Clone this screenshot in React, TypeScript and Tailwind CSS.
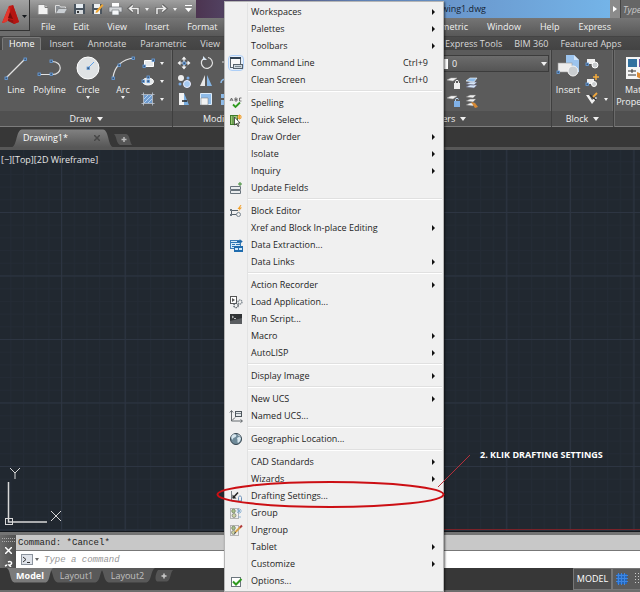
import React from "react";

type SvgProps = { w?: number; h?: number; children: React.ReactNode; className?: string };

function Art({ w = 16, h = 16, children, className = "" }: SvgProps) {
  return (
    <svg width={w} height={h} viewBox={`0 0 ${w} ${h}`} fill="none" aria-hidden="true" className={`shrink-0 ${className}`}>
      {children}
    </svg>
  );
}

function Caret({ big = false }: { big?: boolean }) {
  return big ? (
    <Art w={6} h={4}><path d="M0 0h6L3 4z" fill="#f0f0f0" /></Art>
  ) : (
    <Art w={4} h={3}><path d="M0 0h4L2 3z" fill="#f0f0f0" /></Art>
  );
}

/* ---------- menu icons ---------- */

const menuIcons: Record<string, React.ReactNode> = {
  command: (
    <>
      <rect x="1.500" y="1.500" width="10" height="10" fill="#f8f8f8" stroke="#5a656f" />
      <path d="M1 2h11" stroke="#2f4050" strokeWidth="2" />
      <rect x="4.500" y="8.500" width="9" height="4" fill="#cfd8de" stroke="#55616b" />
      <path d="M6 10.500h6" stroke="#7d8a94" />
    </>
  ),
  spelling: (
    <>
      <path d="M1 5l1.500-3L4 5M1.600 4h2M6 5V2h1.600M6 3.500h2M6 5h2V2M12.500 2H10.500v3h2" stroke="#555" strokeWidth=".8" />
      <path d="M4 8.500l2.500 2.500L11 6.500" stroke="#2f9a1f" strokeWidth="1.800" />
    </>
  ),
  quick: (
    <>
      <rect x="1.500" y="2.500" width="7" height="9" fill="#9cc77a" stroke="#3f7a2a" />
      <path d="M4 2v10" stroke="#3f7a2a" />
      <path d="M5.500 4v8l2-1.500 1.500 3 1-.5-1.300-3H11z" fill="#fff" stroke="#333" strokeWidth=".8" />
      <path d="M10.500 1.500v5M8 4h5M9 2l3 4M12 2L9 6" stroke="#f0a030" />
    </>
  ),
  fields: (
    <>
      <path d="M1.500 5.500h10v3h-10zM1.500 9.500h10v3h-10z" fill="#e9ecee" stroke="#68737c" />
      <path d="M11 1v4M9 3h4" stroke="#3f8a34" />
    </>
  ),
  block: (
    <>
      <path d="M2 6.500h7M2.500 6v5M2 10.500h7" stroke="#56606a" />
      <circle cx="9.500" cy="10.500" r="2" fill="#eee" stroke="#7b8791" />
      <path d="M1 5h2v2H1zM1 10h2v2H1z" fill="#6b7781" />
      <path d="M11.500 1L8.500 5h2l-1.500 3 4-4.500h-2L12.500 1z" fill="#f2a12c" />
    </>
  ),
  extract: (
    <>
      <rect x="1.500" y="2.500" width="10" height="8" fill="#d6ebf8" stroke="#3a7db5" />
      <path d="M2 4.500h9M3 6.500h3M3 8.500h2M7 6.500h4" stroke="#2c77b5" />
      <path d="M5 8h9v6H5z" fill="#1f6cae" />
      <path d="M6 10h3v2H6zM10 10h3v2h-3z" fill="#cfe8f9" />
      <path d="M8 3.500h5M11 1.500l2 2-2 2" stroke="#1b66a8" />
    </>
  ),
  load: (
    <>
      <rect x="1.500" y="1.500" width="6" height="7" fill="#fff" stroke="#555" />
      <path d="M3 3l3 2-3 2z" fill="#555" />
      <circle cx="7" cy="10.500" r="2.200" stroke="#5b646b" strokeDasharray="1.500 .7" strokeWidth="1.300" />
      <circle cx="11" cy="7" r="2" stroke="#7b858c" strokeDasharray="1.300 .6" strokeWidth="1.300" />
    </>
  ),
  script: (
    <>
      <rect x="1" y="2" width="12" height="10" fill="#5a5d60" />
      <path d="M1 2h12v4l-12 3z" fill="#303335" />
      <path d="M3 4l1.500 1L3 6M5 6.500h2" stroke="#fff" strokeWidth=".7" />
    </>
  ),
  ucs: (
    <>
      <path d="M2.500 2v10H13M0.800 3.500L2.500 1.500l1.700 2M11.500 10.500l2 1.500-2 1.500M3 11.500L6 8.500" stroke="#555b60" strokeWidth=".9" />
      <rect x="6.500" y="2.500" width="6" height="5" fill="#e4e8ea" stroke="#4e565c" />
      <path d="M7 4.500h5" stroke="#7b858c" />
    </>
  ),
  geo: (
    <>
      <circle cx="7" cy="7" r="5.500" fill="#6e8a99" stroke="#34444e" />
      <path d="M4 2.500c3-1 4 .5 3 2S4 5 3.500 8C1.500 6 2 4 4 2.500zM8 6c2-1.500 3-1 4 0-.5 3-1.500 4-3 5-1-1.500 0-2-1-5z" fill="#d6e6ee" />
      <path d="M9 2.500l2 2" stroke="#fff" />
    </>
  ),
  drafting: (
    <>
      <path d="M2.500 2v10H13" stroke="#7b8288" />
      <path d="M4 9l5-5.500" stroke="#222" strokeWidth="1.500" />
      <path d="M3.500 5.500v4h4z" fill="#222" />
      <path d="M9.500 12V8.500c0-2 3-2 3 0V12" stroke="#6d93bb" />
    </>
  ),
  group: (
    <>
      <rect x="1.500" y="2.500" width="8" height="10" stroke="#777" strokeDasharray="1 1" />
      <circle cx="4.500" cy="5" r="1.800" fill="#a9bf8d" stroke="#66784f" strokeWidth=".7" />
      <circle cx="5" cy="9.500" r="2" fill="#cbd3a1" stroke="#777" strokeWidth=".7" />
      <path d="M10 2v6M7.500 5H13M8 3l4 4M12 3L8 7M9 11h3" stroke="#7fa9cf" strokeWidth=".8" />
    </>
  ),
  ungroup: (
    <>
      <rect x="1.500" y="2.500" width="8" height="10" stroke="#777" strokeDasharray="1 1" />
      <circle cx="4.500" cy="5" r="1.800" fill="#a9bf8d" stroke="#66784f" strokeWidth=".7" />
      <circle cx="4.500" cy="9.500" r="2" fill="#cbd3a1" stroke="#777" strokeWidth=".7" />
      <path d="M6.500 9L11.500 4" stroke="#d9a448" strokeWidth="2" />
      <path d="M11 4.500L13 2.500" stroke="#b23a3a" strokeWidth="2" />
      <path d="M5.500 10.500l1-1.500" stroke="#333" />
    </>
  ),
  options: (
    <>
      <rect x="2.500" y="3.500" width="9" height="9" fill="#fff" stroke="#6c767d" />
      <path d="M4 7.500l3 3L12.500 5" stroke="#2f9a1f" strokeWidth="2" />
    </>
  ),
};

type Item = { label: string; icon?: string; sub?: boolean; key?: string; on?: boolean };

const menuGroups: Item[][] = [
  [
    { label: "Workspaces", sub: true },
    { label: "Palettes", sub: true },
    { label: "Toolbars", sub: true },
    { label: "Command Line", icon: "command", key: "Ctrl+9", on: true },
    { label: "Clean Screen", key: "Ctrl+0" },
  ],
  [
    { label: "Spelling", icon: "spelling" },
    { label: "Quick Select...", icon: "quick" },
    { label: "Draw Order", sub: true },
    { label: "Isolate", sub: true },
    { label: "Inquiry", sub: true },
    { label: "Update Fields", icon: "fields" },
  ],
  [
    { label: "Block Editor", icon: "block" },
    { label: "Xref and Block In-place Editing", sub: true },
    { label: "Data Extraction...", icon: "extract" },
    { label: "Data Links", sub: true },
  ],
  [
    { label: "Action Recorder", sub: true },
    { label: "Load Application...", icon: "load" },
    { label: "Run Script...", icon: "script" },
    { label: "Macro", sub: true },
    { label: "AutoLISP", sub: true },
  ],
  [{ label: "Display Image", sub: true }],
  [
    { label: "New UCS", sub: true },
    { label: "Named UCS...", icon: "ucs" },
  ],
  [{ label: "Geographic Location...", icon: "geo" }],
  [
    { label: "CAD Standards", sub: true },
    { label: "Wizards", sub: true },
    { label: "Drafting Settings...", icon: "drafting" },
    { label: "Group", icon: "group" },
    { label: "Ungroup", icon: "ungroup" },
    { label: "Tablet", sub: true },
    { label: "Customize", sub: true },
    { label: "Options...", icon: "options" },
  ],
];

function ToolsMenu() {
  return (
    <div role="menu" aria-label="Tools" className="absolute top-px left-[224px] z-10 w-[220px] border border-[#b5b5b5] bg-[#f0f0f0] pt-px pb-0.5 text-[9px] text-[#1e1e1e] shadow-[1px_1px_2px_rgba(0,0,0,0.6)]">
      {menuGroups.map((group, g) => (
        <div key={g}>
          {g > 0 && (
            <div className="flex h-1.5">
              <div className="w-[23px] border-r border-[#e2e3e3]" />
              <div className="flex flex-1 items-center bg-[#f0f0f0]">
                <div className="mr-px h-0.5 flex-1 border-t border-[#e0e0e0] bg-white" />
              </div>
            </div>
          )}
          {group.map((item) => (
            <button key={item.label} role="menuitem" className="flex h-[17px] w-full items-center text-left">
              <span className="flex h-full w-[23px] shrink-0 items-center justify-center border-r border-[#e2e3e3]">
                {item.icon && (
                  <span className={item.on ? "flex rounded-sm border border-[#aecff7] bg-[#e6effa]" : "flex"}>
                    <Art w={14} h={14}>{menuIcons[item.icon]}</Art>
                  </span>
                )}
              </span>
              <span className="flex-1 pl-[3px]">{item.label}</span>
              {item.key && <span className="pr-[15px]">{item.key}</span>}
              {item.sub && (
                <Art w={3} h={6} className="mr-2"><path d="M0 0l3 3-3 3z" fill="#111" /></Art>
              )}
            </button>
          ))}
        </div>
      ))}
    </div>
  );
}

/* ---------- title area ---------- */

function QuickAccess() {
  return (
    <div className="flex h-full items-center gap-0.5 pl-[5px]">
      <button aria-label="New"><Art><path d="M3 3.500h7l3 3v7H3z" fill="#f2f2f2" stroke="#8b8b8b" /><path d="M10 3.500v3h3" stroke="#777" /></Art></button>
      <button aria-label="Open"><Art><path d="M2.500 12.500v-8h4l1 1.500h5v3" stroke="#ddd" fill="#8a8f95" /><path d="M2.500 12.500l3-5h9l-3 5z" fill="#c9ced3" stroke="#777" strokeWidth=".7" /></Art></button>
      <button aria-label="Save"><Art><path d="M3 3h11v10H3z" fill="#47525d" /><path d="M5 3h7v4H5z" fill="#e6edf3" /><path d="M5 9h7v4H5z" fill="#d5d9dc" /><path d="M6 10h2v2H6z" fill="#333" /></Art></button>
      <button aria-label="Save As"><Art><path d="M3 3h10v10H3z" fill="#4c5660" /><path d="M5 3h6v4H5zM5 9h6v4H5z" fill="#eef1f3" /><path d="M7 10l6-7 1.500 1.500-6 7-2 .5z" fill="#eea735" /></Art></button>
      <button aria-label="Plot"><Art><path d="M5 2h7v4H5z" fill="#fff" /><path d="M2 6h13v5H2z" fill="#d5d7da" stroke="#6b6f74" strokeWidth=".7" /><path d="M5 9h7v5H5z" fill="#f6f8fa" stroke="#74787c" strokeWidth=".7" /></Art></button>
      <button aria-label="Undo"><Art><path d="M13 13V7.500H5M8 4L4 7.500 8 11" stroke="#666" strokeWidth="3" /><path d="M13 13V7.500H5M8 4.500L4.500 7.500 8 10.500" stroke="#eee" strokeWidth="1.500" /></Art></button>
      <button aria-label="Undo list" className="flex w-2 justify-center"><Caret /></button>
      <button aria-label="Redo"><Art><path d="M4 13V7.500h8M9 4l4 3.500L9 11" stroke="#666" strokeWidth="3" /><path d="M4 13V7.500h8M9 4.500l3.500 3L9 10.500" stroke="#eee" strokeWidth="1.500" /></Art></button>
      <button aria-label="Redo list" className="flex w-2 justify-center"><Caret /></button>
      <button aria-label="Customize toolbar" className="px-1"><Art w={7} h={8}><path d="M0 .5h7" stroke="#fff" /><path d="M0 3h7L3.500 7z" fill="#fff" /></Art></button>
    </div>
  );
}

function Header() {
  const left = ["File", "Edit", "View", "Insert", "Format"];
  const right = ["Parametric", "Window", "Help", "Express"];
  return (
    <header className="flex h-9 bg-[#6d6d6d]">
      <button aria-label="Application menu" className="flex h-[31px] w-[30px] shrink-0 items-center border-r border-b border-[#333] bg-linear-to-b from-[#a3a3a3] to-[#707070]">
        <Art w={28} h={28}>
          <path d="M2 22L9 5l4-1 6 17-5 2-1-3-5-1-2 2z" fill="#c41a16" />
          <path d="M2 22L9 5l1 6-2 8-2 2z" fill="#e2382e" />
          <path d="M13 4l6 17-5 2-4-12z" fill="#b51512" />
          <path d="M10 11l3 7-5-1z" fill="#7a0d0c" />
          <path d="M8 18l5 1 1 4-6-3z" fill="#961110" />
          <path d="M22 14h5l-2.500 3z" fill="#14181c" />
        </Art>
      </button>
      <div className="flex min-w-0 flex-1 flex-col">
        <div className="flex h-[18px] items-center bg-linear-to-b from-[#a0a0a0] to-[#6d6d6d]">
          <QuickAccess />
          <div className="flex h-full flex-1 items-center justify-end bg-linear-to-r from-[#4c3450] via-[#6487bd] via-40% to-[#74b4e8] pr-[124px]">
            <span className="text-[9px] text-[#152434]">Drawing1.dwg</span>
          </div>
          <button aria-label="Expand search" className="flex h-full w-2.5 items-center justify-center bg-[#8b8b8b]">
            <Art w={4} h={6}><path d="M0 0l4 3-4 3z" fill="#fff" /></Art>
          </button>
          <input aria-label="Search" placeholder="Type a keyword or phrase" className="h-full w-5 border-l border-[#444] bg-[#666] pl-0.5 text-[9px] italic placeholder:text-[#c8c8c8]" />
        </div>
        <nav className="flex h-[18px] items-center overflow-hidden bg-linear-to-b from-[#757575] to-[#585858] text-[9px] text-[#f0f0f0]">
          <div className="flex w-[392px] shrink-0 gap-[18px] pl-[11px]">
            {left.map((t) => <button key={t}>{t}</button>)}
          </div>
          <div className="flex shrink-0 gap-[19px]">
            {right.map((t) => <button key={t}>{t}</button>)}
          </div>
        </nav>
      </div>
    </header>
  );
}

function RibbonTabs() {
  return (
    <nav className="flex h-3.5 items-end overflow-hidden border-t border-[#444] bg-linear-to-b from-[#4b4b4b] to-[#434343] text-[9px] text-[#d8d8d8]">
      <div className="flex h-full w-[438px] shrink-0 items-center gap-3.5">
        <button className="-mr-1.5 ml-0.5 h-full rounded-t-xs border border-b-0 border-[#7a7a7a] bg-[#5c5c5c] px-1.5 leading-3 text-white">Home</button>
        {["Insert", "Annotate", "Parametric", "View"].map((t) => <button key={t}>{t}</button>)}
      </div>
      <div className="flex h-full shrink-0 items-center gap-3 pl-[7px]">
        {["Express Tools", "BIM 360", "Featured Apps"].map((t) => <button key={t}>{t}</button>)}
      </div>
    </nav>
  );
}

/* ---------- ribbon ---------- */

function BigTool({ label, art, caret, className }: { label: string; art: React.ReactNode; caret?: boolean; className: string }) {
  return (
    <button className={`flex flex-col items-center ${className}`}>
      <Art w={26} h={26}>{art}</Art>
      <span className="mt-[3px] leading-3">{label}</span>
      {caret && <Caret />}
    </button>
  );
}

function node(x: number, y: number) {
  return <rect x={x - 1} y={y - 1} width="2.500" height="2.500" fill="#3b5677" stroke="#6aa2e0" strokeWidth=".8" />;
}

function SmallTool({ label, children, caret }: { label: string; children: React.ReactNode; caret?: boolean }) {
  return (
    <button aria-label={label} className="flex h-[18px] items-center gap-1">
      <Art w={16} h={16}>{children}</Art>
      {caret && <Caret />}
    </button>
  );
}

function Panel({ title, className, children, titleClass = "justify-center" }: { title: string; className: string; children: React.ReactNode; titleClass?: string }) {
  return (
    <section className={`flex shrink-0 flex-col border-r border-[#3f3f3f] ${className}`}>
      <div className="flex h-[61px] overflow-hidden border-r border-[#6b6b6b] bg-[#5b5b5b]">{children}</div>
      <button className={`flex flex-1 items-center gap-[5px] border-b border-[#7c7c7c] bg-[#505050] text-[9px] ${titleClass}`}>
        {title}
        {title && <Caret big />}
      </button>
    </section>
  );
}

const sheet = <path d="M1 5l4-2h6l-4 3z" fill="#f4f4f4" stroke="#aaa" strokeWidth=".5" />;

function Ribbon() {
  return (
    <div className="flex h-[77px] overflow-hidden bg-[#5b5b5b] text-[9px] text-[#f2f2f2]">
      <Panel title="Draw" className="w-[173px]">
        <BigTool label="Line" className="w-8 pt-[5px]" art={<><path d="M3 23L22 4" stroke="#e2e2e2" strokeWidth="1.200" />{node(3, 23)}{node(22, 4)}</>} />
        <BigTool label="Polyline" className="w-[35px] pt-[5px]" art={<><path d="M2 19.500h13c11 0 11-13 0-13" stroke="#e2e2e2" strokeWidth="1.200" />{node(2, 19)}{node(14, 19)}{node(14, 6)}</>} />
        <BigTool label="Circle" caret className="w-[42px] pt-[5px]" art={<><circle cx="13" cy="13" r="11" fill="#dfe2e4" stroke="#fff" /><path d="M13 13l6-6" stroke="#5f9fe6" />{node(13, 13)}</>} />
        <BigTool label="Arc" caret className="w-7 pt-[5px]" art={<><path d="M3 23C4 12 12 4 24 3" stroke="#e2e2e2" strokeWidth="1.200" />{node(3, 23)}{node(9, 10)}{node(23, 3)}</>} />
        <div className="flex flex-col pt-1 pl-[3px]">
          <SmallTool label="Rectangle" caret><path d="M4.500 5.500h9v6h-9z" fill="#e6e9eb" stroke="#fff" />{node(4, 11)}{node(13, 5)}</SmallTool>
          <SmallTool label="Ellipse" caret><ellipse cx="8" cy="8.500" rx="5.500" ry="3.500" fill="#e6e9eb" stroke="#fff" />{node(8, 8)}{node(3, 8)}{node(8, 4)}</SmallTool>
          <SmallTool label="Hatch" caret><path d="M4 4h8v8H4z" fill="#6f9ccf" /><path d="M4 8l4-4M4 12l8-8M8 12l4-4" stroke="#d8e8fa" strokeWidth=".7" /><path d="M3.500 1.500v13M12.500 1.500v13M1.500 3.500h13M1.500 12.500h13" stroke="#bfc9d6" strokeWidth=".8" /></SmallTool>
        </div>
      </Panel>
      <Panel title="Modify" className="w-[225px]" titleClass="pl-[30px]">
        <div className="flex gap-1.5 pt-1 pl-[3px]">
          <div className="flex flex-col">
            <SmallTool label="Move"><path d="M8 3v10M3 8h10" stroke="#eee" strokeWidth="1.200" /><path d="M8 1.500l2.500 3h-5zM8 14.500l2.500-3h-5zM1.500 8l3-2.500v5zM14.500 8l-3-2.500v5z" fill="#f5f5f5" />{node(8, 8)}</SmallTool>
            <SmallTool label="Copy"><circle cx="5" cy="5" r="3" fill="#eee" /><circle cx="11" cy="11" r="3.500" fill="#a6c9ef" stroke="#eef" /><circle cx="4" cy="11" r="1.500" fill="#77a9e4" /><circle cx="12" cy="5" r="1.500" fill="#77a9e4" /></SmallTool>
            <SmallTool label="Stretch"><path d="M3 2h5v12H3z" fill="#f2f2f2" /><path d="M8 2l5 12H8z" fill="#79addf" /><path d="M6 10h5" stroke="#222" strokeWidth="1.500" /></SmallTool>
          </div>
          <div className="flex flex-col">
            <SmallTool label="Rotate"><path d="M5 4a5.500 5.500 0 1 0 5-1.500" stroke="#e2e2e2" strokeWidth="1.200" /><path d="M5 1v4h4z" fill="#d9e7f5" /></SmallTool>
            <SmallTool label="Mirror"><path d="M7 2v11H2z" fill="#e8e8e8" /><path d="M9 2v11h5z" fill="#86b5e4" /></SmallTool>
            <SmallTool label="Scale"><path d="M2.500 2.500h11v11h-11z" fill="#8ebbe8" stroke="#dcebf9" /><path d="M3 7h7v7H3z" fill="#f2f2f2" stroke="#777" strokeWidth=".5" /></SmallTool>
          </div>
          <div className="flex flex-col">
            <SmallTool label="Trim"><path d="M2 7h4" stroke="#ddd" /></SmallTool>
            <SmallTool label="Fillet"><path d="M1 10c0-3 2-4 6-4" stroke="#8ebbe8" strokeWidth="1.500" /></SmallTool>
            <SmallTool label="Array"><path d="M1 3h5v4H1zM1 9h5v5H1z" fill="#8ebbe8" /></SmallTool>
          </div>
        </div>
      </Panel>
      <Panel title="Layers" className="w-[154px]" titleClass="pl-[30px]">
        <div className="flex w-full flex-col pt-[5px] pr-px pl-10">
          <div className="relative flex h-[17px] items-center">
            <select aria-label="Layer" className="h-full w-full appearance-none border border-[#3c3c3c] bg-linear-to-b from-[#6c6c6c] to-[#555] pl-[13px] text-[9px] leading-none">
              <option>0</option>
            </select>
            <span className="pointer-events-none absolute left-1.5 h-2.5 w-1 bg-white" />
            <span className="pointer-events-none absolute right-0.5"><Caret big /></span>
          </div>
          <div className="grid grid-cols-[18px_18px] pt-0.5 pl-2">
            <SmallTool label="Lock layer">{sheet}<path d="M8 8h6v6H8z" fill="#eee" /><path d="M9.500 8V6.500c0-1.500 3-1.500 3 0V8" stroke="#eee" /></SmallTool>
            <SmallTool label="Make current"><path d="M2 12l4-2h7l-3 3zM2 9l4-2h7l-3 3z" fill="#d5e6f6" stroke="#668" strokeWidth=".5" /><path d="M2 6l4-3h7l-3 4z" fill="#8dbbe9" stroke="#fff" strokeWidth=".6" /></SmallTool>
            <SmallTool label="Unlock layer">{sheet}<path d="M8 8h6v6H8z" fill="#80b1e8" /><path d="M9.500 8V6.500c0-1.500 3-1.500 3 0" stroke="#bcd7f4" /></SmallTool>
            <SmallTool label="Match layer"><path d="M2 12l4-2h5l-2 3zM2 8l4-2h6l-3 3zM2 4l4-2h6l-3 3z" fill="#eee" stroke="#777" strokeWidth=".5" /><path d="M7 9l4 1 3 4-3 1z" fill="#d88a34" /></SmallTool>
          </div>
        </div>
      </Panel>
      <Panel title="Block" className="w-[62px]">
        <BigTool label="Insert" className="w-8 pt-[5px]" art={<><path d="M11 0h8l5 5v12H11z" fill="#9cc4ee" /><path d="M19 0v5h5" fill="#d3e5f8" /><rect x="3" y="8" width="14" height="9" fill="#ececec" stroke="#999" strokeWidth=".6" /><circle cx="18" cy="16" r="5" fill="#c9cdd0" stroke="#f6f6f6" />{node(3, 17)}</>} />
        <div className="flex flex-col pt-1">
          <SmallTool label="Create block"><path d="M3 4h8v5H3z" fill="#eee" /><circle cx="11" cy="10" r="3" fill="#c9cdd0" stroke="#fff" />{node(3, 9)}</SmallTool>
          <SmallTool label="Edit block"><path d="M3 6h7v5H3z" fill="#eee" /><circle cx="10" cy="11" r="2.500" fill="#c9cdd0" stroke="#fff" />{node(3, 11)}<path d="M12 1v6M9 4h6" stroke="#f4ac3d" strokeWidth="1.500" /></SmallTool>
          <SmallTool label="Edit attributes" caret><path d="M2 4h3l3 5 4-3 1 1-5 6z" fill="#f0f0f0" /><path d="M6 4l6 5" stroke="#2a2a2a" strokeWidth="1.200" /><path d="M9 6l4-4" stroke="#f0a73d" strokeWidth="1.800" /></SmallTool>
        </div>
      </Panel>
      <div className="flex min-w-0 flex-1 flex-col overflow-hidden border-l border-[#6b6b6b]">
        <button className="flex h-[61px] w-[46px] shrink-0 flex-col items-center pt-[5px]">
          <Art w={26} h={26}>
            <path d="M1 2h24v22H1z" fill="#f5f5f5" />
            <path d="M3 4h9v8H3z" fill="#31719f" />
            <path d="M14 4h9v8h-9z" fill="#7a4f9f" />
            <path d="M3 16h8M3 20h8M7 14v4" stroke="#333" />
            <path d="M12 17l5 2-1 5-4-2z" fill="#dd8b34" />
          </Art>
          <span className="mt-[3px] leading-3">Match</span>
          <span className="leading-[11px]">Properties</span>
        </button>
        <div className="flex-1 border-b border-[#7c7c7c] bg-[#505050]" />
      </div>
    </div>
  );
}

function DocumentTabs() {
  return (
    <div className="flex h-[23px] items-end border-b-[3px] border-[#575757] bg-[#373737] pl-3">
      <div className="relative flex h-[18px] w-[101px] items-center">
        <svg className="absolute inset-0 h-full w-full" viewBox="0 0 101 18" preserveAspectRatio="none" aria-hidden="true">
          <defs><linearGradient id="tab" x2="0" y2="1"><stop stopColor="#818181" /><stop offset="1" stopColor="#575757" /></linearGradient></defs>
          <path d="M0 18C5 17 4 1 10 .5h81C97 1 96 17 101 18z" fill="url(#tab)" />
        </svg>
        <button className="relative flex-1 pl-[11px] text-left text-[9px] text-white">Drawing1*</button>
        <button aria-label="Close drawing" className="relative mr-[13px]"><Art w={6} h={6}><path d="M0 0l6 6M6 0L0 6" stroke="#474747" strokeWidth="1.500" /></Art></button>
      </div>
      <button aria-label="New drawing" className="relative mb-0.5">
        <Art w={20} h={11}><path d="M1 0h12c4 1 3 6 6 11H7C3 9 4 3 1 0z" fill="#555" /><path d="M11 3v5M8.500 5.500h5" stroke="#bbb" strokeWidth="1.500" /></Art>
      </button>
    </div>
  );
}

function Canvas() {
  return (
    <main className="relative flex-1 overflow-hidden border-b border-[#15191e] bg-[#212830]">
      <svg className="absolute inset-0 h-full w-full" aria-hidden="true">
        <defs>
          <pattern id="minor" width="12.700" height="12.700" x="-2.500" y="-1.500" patternUnits="userSpaceOnUse">
            <path d="M.5 0v12.700M0 .5h12.700" stroke="#242b35" />
          </pattern>
          <pattern id="major" width="63.600" height="63.500" x="-2.500" y="-1.500" patternUnits="userSpaceOnUse">
            <path d="M.5 0v63.500M0 .5h63.600" stroke="#2d3542" />
          </pattern>
        </defs>
        <rect width="100%" height="100%" fill="url(#minor)" />
        <rect width="100%" height="100%" fill="url(#major)" />
      </svg>
      <p className="relative pt-[3px] pl-px text-[9px] leading-[13px] text-[#e6e6e6]">[−][Top][2D Wireframe]</p>
      <div className="absolute right-0 bottom-px left-[444px] h-px bg-[#7a2229]" />
      <svg className="absolute bottom-1 left-1 text-white" width="60" height="62" viewBox="0 0 60 62" fill="none" stroke="#d8d8d8" aria-hidden="true">
        <path d="M4.500 17v40H43" strokeWidth="1.500" />
        <rect x="1.500" y="53.500" width="7" height="6" />
        <path d="M6 3l5 5 5-5M11 8v6M47 46l10 10M57 46L47 56" />
      </svg>
    </main>
  );
}

function CommandWindow() {
  return (
    <section className="flex h-9 border-t-[3px] border-[#747474] bg-white">
      <div className="flex w-4 shrink-0 flex-col items-center gap-[5px] overflow-hidden bg-linear-to-r from-[#6a6a6a] to-[#505050] pt-[3px]">
        <Art w={13} h={4}><path d="M0 .5h13M0 3.500h13" stroke="#aaa" strokeDasharray="1 1" /></Art>
        <button aria-label="Close command line"><Art w={7} h={7}><path d="M0 0l7 7M7 0L0 7" stroke="#fff" strokeWidth="1.500" /></Art></button>
        <button aria-label="Customize command line"><Art w={12} h={8}><path d="M3 7l2-1M6 3c4-2 5 3 1 3l2 2" stroke="#fff" strokeWidth="1.500" /></Art></button>
      </div>
      <div className="flex min-w-0 flex-1 flex-col font-['Liberation_Mono',monospace] text-[9px]">
        <p className="h-4 border-b border-[#777] bg-[#c8c8c8] pl-0.5 leading-4 text-[#222]">Command: *Cancel*</p>
        <div className="flex flex-1 items-center pl-[5px]">
          <button aria-label="Recent commands" className="flex items-center gap-0.5">
            <Art w={12} h={11}><rect x=".5" y=".5" width="11" height="10" fill="#dfe3ea" stroke="#8b939d" /><path d="M2 3l3 2.500L2 8M6 8.500h3" stroke="#333" /></Art>
            <Art w={4} h={3}><path d="M0 0h4L2 3z" fill="#666" /></Art>
          </button>
          <input aria-label="Command" placeholder="Type a command" className="ml-1 h-full flex-1 pl-px italic outline-none placeholder:text-[#969696]" />
        </div>
      </div>
    </section>
  );
}

function LayoutTab({ label, active }: { label: string; active?: boolean }) {
  return (
    <button className={`relative -mr-1 flex h-[15px] items-center justify-center ${active ? "z-[1] w-[46px] text-[9px] font-bold text-white" : "w-[55px] text-[9px] text-[#c0c0c0]"}`}>
      <svg className="absolute inset-0 h-full w-full" viewBox="0 0 50 15" preserveAspectRatio="none" aria-hidden="true">
        <path d="M0 0h50C46 2 47 14 42 14.500H8C3 14 4 2 0 0z" fill={active ? "#7b7b7b" : "#595959"} />
      </svg>
      <span className="relative">{label}</span>
    </button>
  );
}

function StatusBar() {
  return (
    <footer className="flex h-6 items-start justify-between border-b-2 border-[#6d6d6d] bg-[#373737]">
      <div className="flex pl-[7px]">
        <LayoutTab label="Model" active />
        <LayoutTab label="Layout1" />
        <LayoutTab label="Layout2" />
        <button aria-label="New layout" className="ml-1">
          <Art w={18} h={12}><path d="M3 0h15c-3 3-2 10-6 11.500H2C-1 9 1 3 3 0z" fill="#555" /><path d="M9 3.500v5M6.500 6h5" stroke="#ccc" strokeWidth="1.500" /></Art>
        </button>
      </div>
      <div className="flex h-full">
        <button className="w-[39px] border border-[#777] bg-[#4f4f4f] text-[9px] text-white">MODEL</button>
        <div className="flex w-7 items-center gap-[7px] border border-r-0 border-[#777] bg-[#5b5b5b] pl-[3px]">
          <button aria-label="Grid"><Art w={12} h={12}><path d="M1 1h10v10H1z" fill="#2265ba" /><path d="M2.500 0v12M5.500 0v12M8.500 0v12M0 2.500h12M0 5.500h12M0 8.500h12" stroke="#3f86e0" /></Art></button>
          <button aria-label="Snap"><Art w={10} h={12}><path d="M0 .5h12M0 3.500h12M0 6.500h12M0 9.500h12" stroke="#ccc" strokeDasharray="1 2" /></Art></button>
        </div>
      </div>
    </footer>
  );
}

function Callout() {
  return (
    <div className="pointer-events-none absolute top-[448px] left-[216px] z-20">
      <svg width="260" height="64" viewBox="0 0 260 64" fill="none" aria-hidden="true">
        <path d="M254 7l-32 32" stroke="#b5303a" />
        <ellipse cx="114.500" cy="46.500" rx="113" ry="12.500" stroke="#cc0f14" strokeWidth="2" />
      </svg>
      <p className="absolute top-0 left-[264px] text-[9px] leading-[13px] font-bold whitespace-nowrap text-white">2. KLIK DRAFTING SETTINGS</p>
    </div>
  );
}

export default function App() {
  return (
    <div className="relative flex h-screen min-h-[592px] flex-col overflow-hidden bg-[#373737] font-['Open_Sans','Noto_Sans',sans-serif] whitespace-nowrap">
      <Header />
      <RibbonTabs />
      <Ribbon />
      <DocumentTabs />
      <Canvas />
      <CommandWindow />
      <StatusBar />
      <ToolsMenu />
      <Callout />
    </div>
  );
}
